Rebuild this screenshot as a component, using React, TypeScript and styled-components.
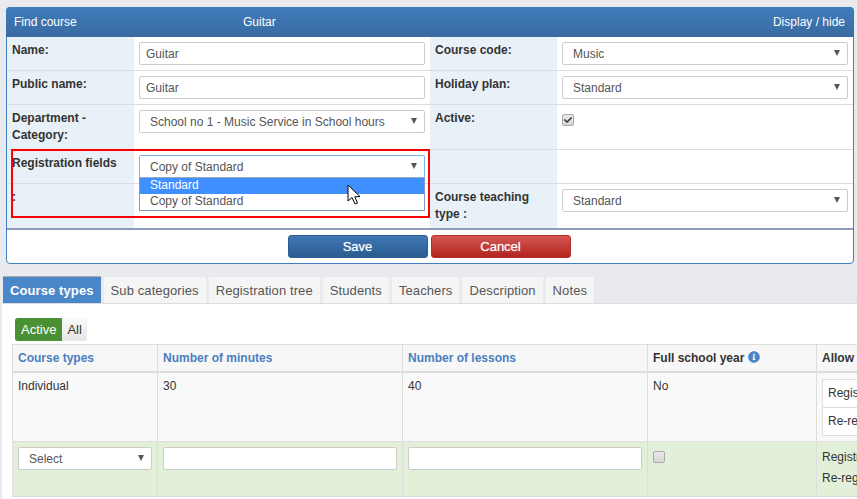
import React from 'react';
import styled, { createGlobalStyle } from 'styled-components';
import { FaCheck, FaInfoCircle } from 'react-icons/fa';

const GlobalStyle = createGlobalStyle`
	html, body {
		margin: 0;
		padding: 0;
		height: 100%;
		overflow: hidden;
		background: #e9eaee;
		font-family: "Liberation Sans", Arial, sans-serif;
		font-size: 12px;
		color: #333;
	}
`;

const Page = styled.div`
	width: 857px;
	height: 499px;
	overflow: hidden;
	padding-top: 7px;
	box-sizing: border-box;
`;

const Panel = styled.section`
	position: relative;
	width: 848px;
	margin-left: 6px;
	box-sizing: border-box;
	border: 1px solid #3f7fc4;
	border-radius: 4px;
	background: #fff;
`;

const PanelHeader = styled.header`
	display: grid;
	grid-template-columns: 229px 1fr auto;
	align-items: center;
	height: 30px;
	margin: -1px -1px 0;
	padding: 0 9px 0 8px;
	border-radius: 4px 4px 0 0;
	background: linear-gradient(#3f7cbc, #3a6ba1);
	color: #fff;
	font-size: 12px;
`;

const FormGrid = styled.div`
	display: grid;
	grid-template-columns: 127px 296px 127px 296px;
	border-bottom: 2px solid #8a9bbd;

	& > :nth-last-child(-n + 4) {
		border-bottom: none;
	}
`;

const Label = styled.div`
	padding: 5px;
	background: #e9f1f8;
	border-bottom: 1px solid #ddd;
	font-weight: bold;
	line-height: 17px;
	color: #333;
`;

const Field = styled.div`
	padding: 5px;
	border-bottom: 1px solid #ddd;
	min-height: 23px;
`;

const TextInput = styled.input`
	display: block;
	width: 100%;
	height: 23px;
	box-sizing: border-box;
	padding: 0 6px;
	border: 1px solid #ccc;
	border-radius: 2px;
	background: #fff;
	font: 12px "Liberation Sans", Arial, sans-serif;
	color: #555;
	outline: none;
`;

const SelectBox = styled.div<{ $focused?: boolean }>`
	position: relative;
	display: flex;
	align-items: center;
	justify-content: space-between;
	height: 23px;
	box-sizing: border-box;
	padding: 0 7px 0 10px;
	border: 1px solid ${(p) => (p.$focused ? '#7fb2e5' : '#ccc')};
	border-radius: 2px;
	background: #fff;
	color: #555;
`;

const Arrow = styled.span`
	width: 0;
	height: 0;
	margin-bottom: 2px;
	border-left: 3px solid transparent;
	border-right: 3px solid transparent;
	border-top: 6px solid #555;
`;

const DropList = styled.ul`
	position: absolute;
	z-index: 2;
	top: 21px;
	left: -1px;
	right: -1px;
	margin: 0;
	padding: 0;
	list-style: none;
	background: #fff;
	border: 1px solid #7f9db9;
	border-top-color: #9ab;
`;

const DropItem = styled.li<{ $active?: boolean }>`
	height: 16px;
	line-height: 15px;
	padding-left: 10px;
	background: ${(p) => (p.$active ? '#3f8fff' : '#fff')};
	color: ${(p) => (p.$active ? '#fff' : '#555')};
`;

const CheckBox = styled.span`
	display: flex;
	align-items: center;
	justify-content: center;
	width: 12px;
	height: 12px;
	box-sizing: border-box;
	margin-top: 4px;
	border: 1px solid #aaa;
	border-radius: 2px;
	background: linear-gradient(#e8e8e8, #d6d6d6);
	color: #333;
	font-size: 8px;
`;

const Annotation = styled.div`
	position: absolute;
	z-index: 3;
	left: 4px;
	top: 141px;
	width: 419px;
	height: 69px;
	box-sizing: border-box;
	border: 2px solid #f00;
	pointer-events: none;
`;

const Pointer = styled.svg`
	position: absolute;
	z-index: 4;
	left: 340px;
	top: 176px;
`;

const PanelFooter = styled.footer`
	display: flex;
	justify-content: center;
	gap: 3px;
	padding: 5px 2px 5px 0;
`;

const Button = styled.button<{ $danger?: boolean }>`
	width: 140px;
	height: 23px;
	padding: 0;
	border: 1px solid ${(p) => (p.$danger ? '#b5312a' : '#2f5f92')};
	border-radius: 3px;
	background: ${(p) =>
		p.$danger
			? 'linear-gradient(#d45752, #b3241f)'
			: 'linear-gradient(#3f78b5, #2b5b8f)'};
	color: #fff;
	font: 13px "Liberation Sans", Arial, sans-serif;
	text-shadow: 0 0 1px rgba(255, 255, 255, 0.6);
`;

const TabBar = styled.nav`
	display: flex;
	gap: 3px;
	height: 27px;
	margin: 12px 0 0 3px;
`;

const Tab = styled.div<{ $active?: boolean }>`
	display: flex;
	align-items: center;
	box-sizing: border-box;
	height: 27px;
	padding: 0 7px;
	font-size: 13px;
	letter-spacing: 0.1px;
	background: ${(p) => (p.$active ? '#4a87c8' : '#f5f5f5')};
	background-clip: padding-box;
	color: ${(p) => (p.$active ? '#fff' : '#555')};
	font-weight: ${(p) => (p.$active ? 'bold' : 'normal')};
	border-top: 1px solid ${(p) => (p.$active ? '#aaa' : 'transparent')};
`;

const TabContent = styled.div`
	margin-left: 2px;
	height: 200px;
	padding: 14px 0 0 10px;
	box-sizing: border-box;
	background: #fff;
	border-top: 1px solid #ddd;
`;

const Toggle = styled.div`
	display: inline-flex;
	height: 23px;
	margin: 0 0 3px 3px;
	border-radius: 3px;
	overflow: hidden;
	box-shadow: 0 0 0 1px #ccc inset;
	vertical-align: top;
`;

const ToggleItem = styled.span<{ $on?: boolean }>`
	display: flex;
	align-items: center;
	padding: 0 ${(p) => (p.$on ? '6px' : '5px')};
	background: ${(p) => (p.$on ? '#4a9136' : 'linear-gradient(#fafafa, #e6e6e6)')};
	color: ${(p) => (p.$on ? '#fff' : '#333')};
	font-size: 13px;
`;

const Table = styled.table`
	table-layout: fixed;
	width: 1000px;
	border-collapse: collapse;
`;

const HeadCell = styled.th<{ $plain?: boolean }>`
	height: 26px;
	padding: 0 5px;
	border: 1px solid #ddd;
	border-bottom: 2px solid #ddd;
	background: #f7f7f7;
	text-align: left;
	font-size: 12px;
	white-space: nowrap;
	color: ${(p) => (p.$plain ? '#333' : '#4a7fc0')};
`;

const InfoIcon = styled(FaInfoCircle)`
	margin-left: 4px;
	vertical-align: -1px;
	color: #4a87c8;
	font-size: 12px;
`;

const DataCell = styled.td`
	height: 57px;
	padding: 6px 5px 5px;
	border: 1px solid #ddd;
	background: #f9f9f9;
	vertical-align: top;
	line-height: 15px;
	white-space: nowrap;
`;

const NewCell = styled.td`
	height: 44px;
	padding: 5px;
	border: 1px solid #ddd;
	background: #e2efd9;
	vertical-align: top;
	white-space: nowrap;
`;

const InnerList = styled.div`
	width: 120px;
	border: 1px solid #ddd;
	background: #fff;
`;

const InnerRow = styled.div`
	height: 27px;
	line-height: 27px;
	padding-left: 5px;
	& + & {
		border-top: 1px solid #ddd;
	}
`;

const NewLine = styled.div`
	height: 21px;
	line-height: 21px;
`;

export default function App() {
	return (
		<Page>
			<GlobalStyle />
			<Panel>
				<PanelHeader>
					<span>Find course</span>
					<span>Guitar</span>
					<span>Display / hide</span>
				</PanelHeader>
				<FormGrid>
					<Label>Name:</Label>
					<Field><TextInput readOnly value="Guitar" /></Field>
					<Label>Course code:</Label>
					<Field><SelectBox>Music<Arrow /></SelectBox></Field>

					<Label>Public name:</Label>
					<Field><TextInput readOnly value="Guitar" /></Field>
					<Label>Holiday plan:</Label>
					<Field><SelectBox>Standard<Arrow /></SelectBox></Field>

					<Label>Department - Category:</Label>
					<Field><SelectBox>School no 1 - Music Service in School hours<Arrow /></SelectBox></Field>
					<Label>Active:</Label>
					<Field><CheckBox><FaCheck /></CheckBox></Field>

					<Label>Registration fields</Label>
					<Field>
						<SelectBox $focused>
							Copy of Standard<Arrow />
							<DropList>
								<DropItem $active>Standard</DropItem>
								<DropItem>Copy of Standard</DropItem>
							</DropList>
						</SelectBox>
					</Field>
					<Label />
					<Field />

					<Label>:</Label>
					<Field />
					<Label>Course teaching type :</Label>
					<Field><SelectBox>Standard<Arrow /></SelectBox></Field>
				</FormGrid>
				<PanelFooter>
					<Button>Save</Button>
					<Button $danger>Cancel</Button>
				</PanelFooter>
				<Annotation />
				<Pointer width="16" height="22" viewBox="0 0 16 22">
					<path d="M1 1 V17 L5 13.5 L8 20 L10.5 19 L7.8 12.8 L13 12.5 Z" fill="#fff" stroke="#000" strokeWidth="1" />
				</Pointer>
			</Panel>

			<TabBar>
				<Tab $active>Course types</Tab>
				<Tab>Sub categories</Tab>
				<Tab>Registration tree</Tab>
				<Tab>Students</Tab>
				<Tab>Teachers</Tab>
				<Tab>Description</Tab>
				<Tab>Notes</Tab>
			</TabBar>
			<TabContent>
				<Toggle>
					<ToggleItem $on>Active</ToggleItem>
					<ToggleItem>All</ToggleItem>
				</Toggle>
				<Table>
					<colgroup>
						<col width="145" />
						<col width="245" />
						<col width="245" />
						<col width="169" />
						<col width="196" />
					</colgroup>
					<thead>
						<tr>
							<HeadCell>Course types</HeadCell>
							<HeadCell>Number of minutes</HeadCell>
							<HeadCell>Number of lessons</HeadCell>
							<HeadCell $plain>Full school year<InfoIcon /></HeadCell>
							<HeadCell $plain>Allow registration</HeadCell>
						</tr>
					</thead>
					<tbody>
						<tr>
							<DataCell>Individual</DataCell>
							<DataCell>30</DataCell>
							<DataCell>40</DataCell>
							<DataCell>No</DataCell>
							<DataCell>
								<InnerList>
									<InnerRow>Registration</InnerRow>
									<InnerRow>Re-registration</InnerRow>
								</InnerList>
							</DataCell>
						</tr>
						<tr>
							<NewCell><SelectBox>Select<Arrow /></SelectBox></NewCell>
							<NewCell><TextInput readOnly value="" /></NewCell>
							<NewCell><TextInput readOnly value="" /></NewCell>
							<NewCell><CheckBox /></NewCell>
							<NewCell>
								<NewLine>Registration</NewLine>
								<NewLine>Re-registration</NewLine>
							</NewCell>
						</tr>
					</tbody>
				</Table>
			</TabContent>
		</Page>
	);
}
